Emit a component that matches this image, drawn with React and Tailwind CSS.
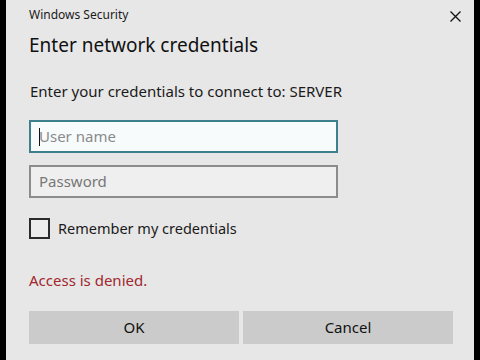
export default function App() {
  const font = { fontFamily: '"Noto Sans", "Open Sans", sans-serif' };
  return (
    <div className="w-[480px] h-[360px] bg-black flex overflow-hidden" style={font}>
      <div className="ml-[6px] w-[468px] h-full bg-[#e7e7e7] flex flex-col pl-[23px] pr-[21px]">
        <div className="flex items-start justify-between h-[30px] pt-[6px]">
          <span className="text-[12px] text-[#1a1a1a] leading-[18px]">Windows Security</span>
          <svg width="11" height="11" viewBox="0 0 11 11" className="mt-[5px] -mr-[8px]">
            <path d="M0.5 0.5 L10.5 10.5 M10.5 0.5 L0.5 10.5" stroke="#111" strokeWidth="1.3" fill="none" />
          </svg>
        </div>
        <div className="text-[19px] leading-[28px] text-[#111] mt-[1px]">Enter network credentials</div>
        <div className="text-[15px] leading-[20px] text-[#1a1a1a] mt-[22px] pl-[1px]">
          Enter your credentials to connect to: SERVER
        </div>
        <div className="mt-[19px] w-[309px] h-[33px] border-2 border-[#3d7f8d] bg-[#f7fbfc] flex items-center pl-[8px]">
          <span className="w-px h-[18px] bg-[#111]"></span>
          <span className="text-[15px] text-[#8a8a8a] -ml-[1px]">User name</span>
        </div>
        <div className="mt-[12px] w-[309px] h-[33px] border-2 border-[#8c8c8c] bg-[#efefef] flex items-center pl-[8px]">
          <span className="text-[15px] text-[#777]">Password</span>
        </div>
        <div className="mt-[20px] flex items-center gap-[8px]">
          <div className="w-[21px] h-[21px] border-2 border-[#2b2b2b] bg-[#ececec]"></div>
          <span className="text-[14.5px] text-[#1a1a1a]">Remember my credentials</span>
        </div>
        <div className="mt-[30px] text-[15px] text-[#a0282e] leading-[20px]">Access is denied.</div>
        <div className="mt-[21px] flex gap-[4px]">
          <div className="w-[210px] h-[33px] bg-[#cbcbcb] flex items-center justify-center text-[15px] text-[#111]">OK</div>
          <div className="w-[210px] h-[33px] bg-[#cbcbcb] flex items-center justify-center text-[15px] text-[#111]">Cancel</div>
        </div>
      </div>
    </div>
  );
}
